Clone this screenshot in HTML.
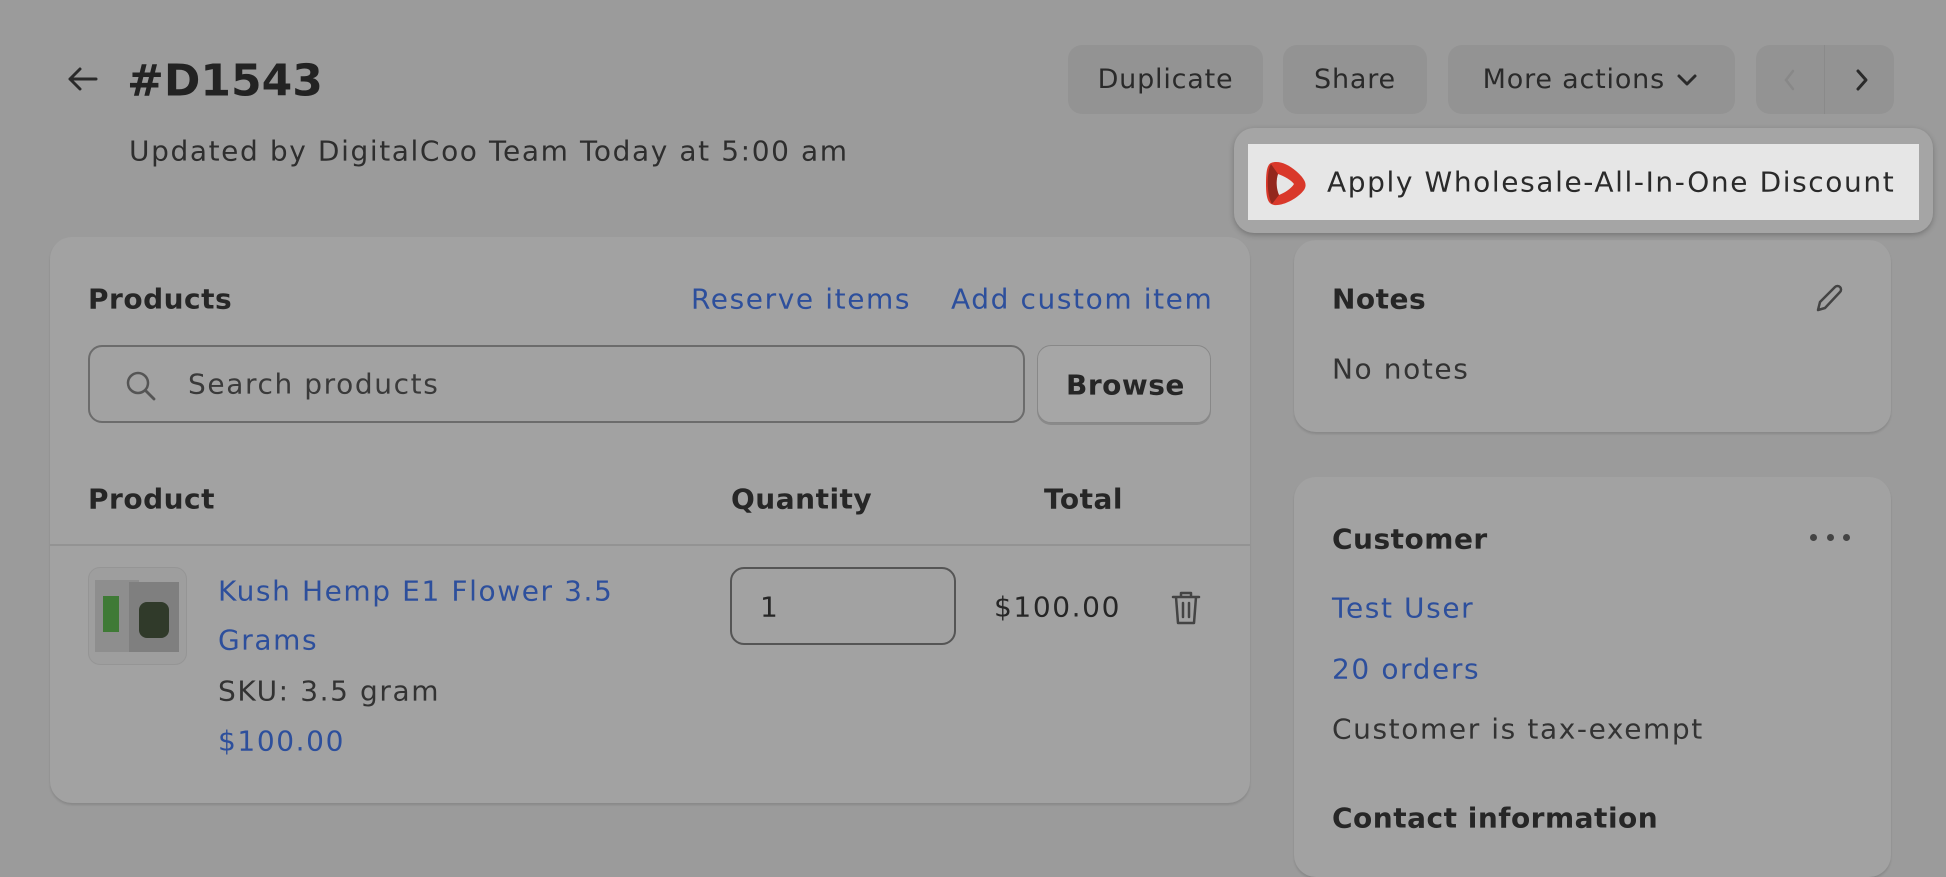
<!DOCTYPE html>
<html><head><meta charset="utf-8"><style>
*{margin:0;padding:0;box-sizing:border-box}
body{width:1946px;height:840px;overflow:hidden;background:#9b9b9b;font-family:"DejaVu Sans","Liberation Sans",sans-serif;color:#262626;position:relative;font-size:28px;letter-spacing:1.6px}
.a{position:absolute;white-space:nowrap}
.card{position:absolute;background:#a2a2a2;border-radius:22px;box-shadow:0 2px 2px rgba(0,0,0,.12)}
.btn{position:absolute;background:#939393;border-radius:14px;height:69px;top:45px;font-size:27px;color:#2a2a2a;display:flex;align-items:center;justify-content:center;letter-spacing:0.8px}
.b{font-weight:bold;letter-spacing:0.5px}
.lk{color:#2d4f9c}
.t{transform:translateY(-50%)}
</style></head><body>
<svg class="a" style="left:66px;top:66px" width="32" height="26" viewBox="0 0 32 26"><path d="M30 13H4M14 3L4 13l10 10" fill="none" stroke="#2a2a2a" stroke-width="3" stroke-linecap="round" stroke-linejoin="round"/></svg>
<div class="a b t" style="left:127px;top:81px;font-size:44px;letter-spacing:0px;color:#232323">#D1543</div>
<div class="a t" style="left:129px;top:151px;color:#2e2e2e">Updated by DigitalCoo Team Today at 5:00 am</div>

<div class="btn" style="left:1068px;width:195px">Duplicate</div>
<div class="btn" style="left:1283px;width:144px">Share</div>
<div class="btn" style="left:1448px;width:287px">More actions&nbsp;<svg width="26" height="18" viewBox="0 0 26 18"><path d="M5 5l8 8 8-8" fill="none" stroke="#2a2a2a" stroke-width="3" stroke-linecap="round" stroke-linejoin="round"/></svg></div>
<div class="btn" style="left:1756px;width:138px;justify-content:flex-start">
<svg style="position:absolute;left:24px;top:22px" width="20" height="26" viewBox="0 0 20 26"><path d="M13 4L6 13l7 9" fill="none" stroke="#888" stroke-width="2.5" stroke-linecap="round"/></svg>
<div style="position:absolute;left:68px;top:0;width:1px;height:69px;background:#8a8a8a"></div>
<svg style="position:absolute;left:96px;top:22px" width="20" height="26" viewBox="0 0 20 26"><path d="M6 4l8 9-8 9" fill="none" stroke="#2a2a2a" stroke-width="3" stroke-linecap="round" stroke-linejoin="round"/></svg>
</div>

<div class="card" style="left:1234px;top:128px;width:699px;height:105px;background:#a5a5a5;border-radius:20px;box-shadow:0 2px 6px rgba(0,0,0,.25);z-index:3">
<div style="position:absolute;left:14px;top:16px;width:671px;height:76px;background:#e6e6e6"></div>
<svg style="position:absolute;left:28px;top:30px" width="48" height="50" viewBox="0 0 48 50"><path d="M9 5C16 2 26 6 34 13C42 20 46 26 42 32C36 40 22 48 12 47C6 46 4 40 4 26C4 14 5 7 9 5Z" fill="#d9382a"/><path d="M16 16C22 18 29 22 32 26C29 31 22 35 17 37C14 30 14 22 16 16Z" fill="#e6e6e6"/><path d="M9 6C5 12 4 36 10 46L17 37C14 30 14 22 16 16Z" fill="#5a1a12" opacity=".55"/></svg>
<div class="a t" style="left:93px;top:54px;color:#2a2a2a;font-size:28px">Apply Wholesale-All-In-One Discount</div>
</div>

<div class="card" style="left:50px;top:237px;width:1200px;height:566px">
<div class="a b t" style="left:38px;top:62px">Products</div>
<div class="a t lk" style="left:641px;top:62px">Reserve items</div>
<div class="a t lk" style="left:901px;top:62px">Add custom item</div>
<div style="position:absolute;left:38px;top:108px;width:937px;height:78px;border:2px solid #6c6c6c;border-radius:14px"></div>
<svg class="a" style="left:74px;top:132px" width="34" height="34" viewBox="0 0 34 34"><circle cx="14" cy="14" r="10" fill="none" stroke="#555" stroke-width="2.5"/><path d="M21.5 21.5L30 30" stroke="#555" stroke-width="2.8" stroke-linecap="round"/></svg>
<div class="a t" style="left:138px;top:147px;color:#3a3a3a">Search products</div>
<div style="position:absolute;left:987px;top:108px;width:174px;height:78px;border:1.5px solid #888;border-radius:14px;background:#a6a6a6;box-shadow:0 2px 0 #8a8a8a"></div>
<div class="a b t" style="left:1016px;top:148px">Browse</div>
<div class="a b t" style="left:38px;top:262px">Product</div>
<div class="a b t" style="left:681px;top:262px">Quantity</div>
<div class="a b t" style="left:994px;top:262px">Total</div>
<div style="position:absolute;left:0;top:307px;width:1200px;height:2px;background:#939393"></div>
<div style="position:absolute;left:38px;top:330px;width:99px;height:98px;border:1.5px solid #959595;border-radius:12px;background:#9e9e9e;overflow:hidden">
<div style="position:absolute;left:6px;top:12px;width:44px;height:72px;background:#8e8e8e"></div>
<div style="position:absolute;left:14px;top:28px;width:16px;height:36px;background:#3f7a36"></div>
<div style="position:absolute;left:40px;top:14px;width:50px;height:70px;background:#7f7f7f"></div>
<div style="position:absolute;left:50px;top:34px;width:30px;height:36px;background:#303a2a;border-radius:8px"></div>
</div>
<div class="a t lk" style="left:168px;top:354px">Kush Hemp E1 Flower 3.5</div>
<div class="a t lk" style="left:168px;top:403px">Grams</div>
<div class="a t" style="left:168px;top:454px;color:#333">SKU: 3.5 gram</div>
<div class="a t lk" style="left:168px;top:504px">$100.00</div>
<div style="position:absolute;left:680px;top:330px;width:226px;height:78px;border:2px solid #555;border-radius:14px"></div>
<div class="a t" style="left:710px;top:370px">1</div>
<div class="a t" style="left:944px;top:370px">$100.00</div>
<svg class="a" style="left:1120px;top:352px" width="32" height="38" viewBox="0 0 32 38"><path d="M3 8h26M11 8V4h10v4M6 8l2 26h16l2-26M13 14v14M19 14v14" fill="none" stroke="#444" stroke-width="2.5" stroke-linecap="round" stroke-linejoin="round"/></svg>
</div>

<div class="card" style="left:1294px;top:240px;width:597px;height:192px">
<div class="a b t" style="left:38px;top:59px">Notes</div>
<svg class="a" style="left:518px;top:42px" width="34" height="34" viewBox="0 0 34 34"><path d="M6 28l2-8L23 5a3 3 0 015 5L13 26z" fill="none" stroke="#444" stroke-width="2.5" stroke-linejoin="round"/></svg>
<div class="a t" style="left:38px;top:129px;color:#333">No notes</div>
</div>

<div class="card" style="left:1294px;top:477px;width:597px;height:400px">
<div class="a b t" style="left:38px;top:62px">Customer</div>
<div class="a" style="left:516px;top:57px;width:40px;height:8px;display:flex;justify-content:space-between"><i style="width:7px;height:7px;border-radius:50%;background:#444"></i><i style="width:7px;height:7px;border-radius:50%;background:#444"></i><i style="width:7px;height:7px;border-radius:50%;background:#444"></i></div>
<div class="a t lk" style="left:38px;top:131px">Test User</div>
<div class="a t lk" style="left:38px;top:192px">20 orders</div>
<div class="a t" style="left:38px;top:252px;color:#333">Customer is tax-exempt</div>
<div class="a b t" style="left:38px;top:341px">Contact information</div>
</div>
</body></html>
